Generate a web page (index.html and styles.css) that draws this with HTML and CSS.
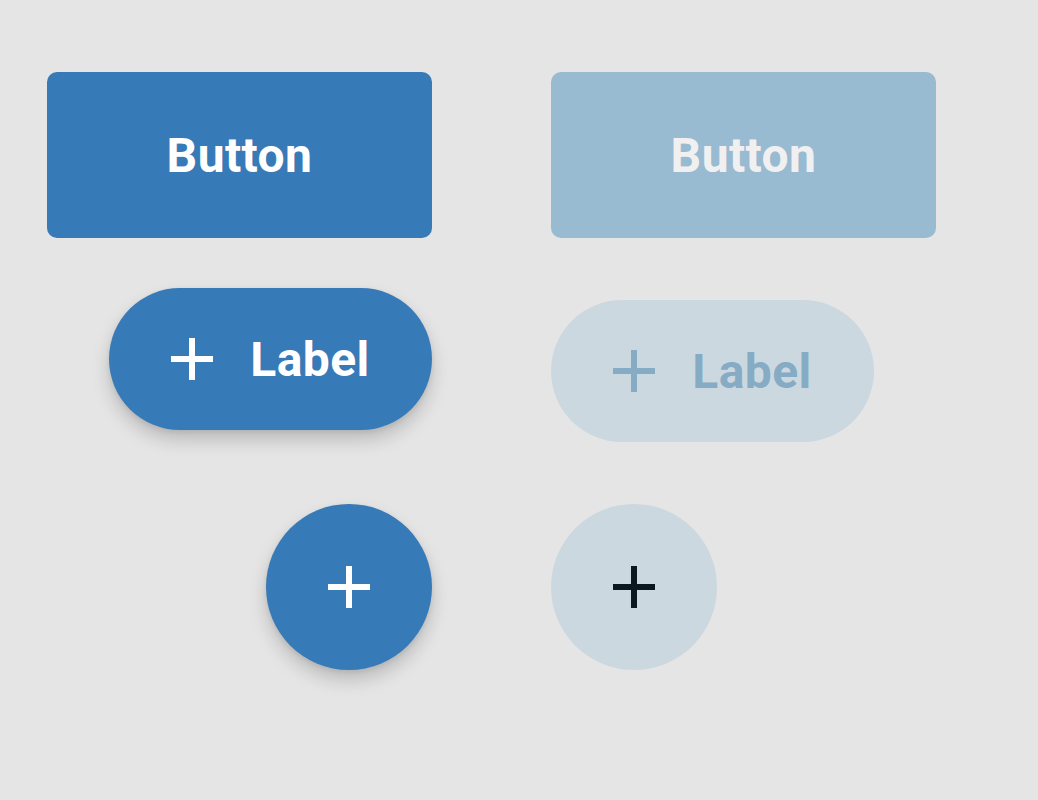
FILE: index.html
```html
<!DOCTYPE html>
<html>
<head>
<meta charset="utf-8">
<link rel="stylesheet" href="styles.css">
</head>
<body>
<main class="board">
  <button class="btn btn-rect">Button</button>
  <button class="btn btn-rect is-disabled">Button</button>

  <button class="btn btn-pill is-raised">
    <svg class="ico" viewBox="5 5 14 14"><path d="M19 13h-6v6h-2v-6H5v-2h6V5h2v6h6v2z"/></svg>
    <span>Label</span>
  </button>
  <button class="btn btn-pill is-disabled">
    <svg class="ico" viewBox="5 5 14 14"><path d="M19 13h-6v6h-2v-6H5v-2h6V5h2v6h6v2z"/></svg>
    <span>Label</span>
  </button>

  <button class="btn btn-fab is-raised-fab">
    <svg class="ico" viewBox="5 5 14 14"><path d="M19 13h-6v6h-2v-6H5v-2h6V5h2v6h6v2z"/></svg>
  </button>
  <button class="btn btn-fab is-disabled">
    <svg class="ico" viewBox="5 5 14 14"><path d="M19 13h-6v6h-2v-6H5v-2h6V5h2v6h6v2z"/></svg>
  </button>
</main>
</body>
</html>
```
FILE: styles.css
```css
html, body {
  margin: 0;
  padding: 0;
  background: #e5e5e5;
}
body {
  width: 1038px;
  height: 800px;
  overflow: hidden;
  font-family: Roboto, "Liberation Sans", sans-serif;
}
.board {
  display: grid;
  grid-template-columns: 385px 385px;
  column-gap: 119px;
  row-gap: 62px;
  padding: 72px 0 0 47px;
  align-items: start;
}
.btn {
  border: none;
  margin: 0;
  padding: 0;
  font-family: Roboto, "Liberation Sans", sans-serif;
  font-weight: 700;
  font-size: 48px;
  letter-spacing: 0.4px;
  color: #ffffff;
  background: #377ab8;
  display: flex;
  align-items: center;
  justify-content: center;
  cursor: pointer;
}
.btn:nth-child(odd) { justify-self: end; }
.btn:nth-child(even) { justify-self: start; }

.btn-rect {
  width: 385px;
  height: 166px;
  border-radius: 10px;
}
.btn-rect.is-disabled {
  background: #98bbd2;
  color: #f0f0f0;
}

.btn-pill {
  width: 323px;
  height: 142px;
  border-radius: 71px;
  gap: 37px;
}
.btn-pill .ico {
  width: 42px;
  height: 42px;
  fill: #ffffff;
}
.btn-pill.is-raised {
  transform: translateY(-12px);
  box-shadow: 0 10px 18px rgba(0, 0, 0, 0.18), 0 2px 5px rgba(0, 0, 0, 0.08);
}
.btn-pill.is-disabled {
  background: #ccd8e0;
  color: #86abc4;
}
.btn-pill.is-disabled .ico { fill: #86abc4; }

.btn-fab {
  width: 166px;
  height: 166px;
  border-radius: 50%;
}
.btn-fab .ico {
  width: 42px;
  height: 42px;
  fill: #ffffff;
}
.btn-fab.is-raised-fab {
  box-shadow: 0 10px 18px rgba(0, 0, 0, 0.18), 0 2px 5px rgba(0, 0, 0, 0.08);
}
.btn-fab.is-disabled {
  background: #ccd8e0;
}
.btn-fab.is-disabled .ico { fill: #0b1820; }
```
